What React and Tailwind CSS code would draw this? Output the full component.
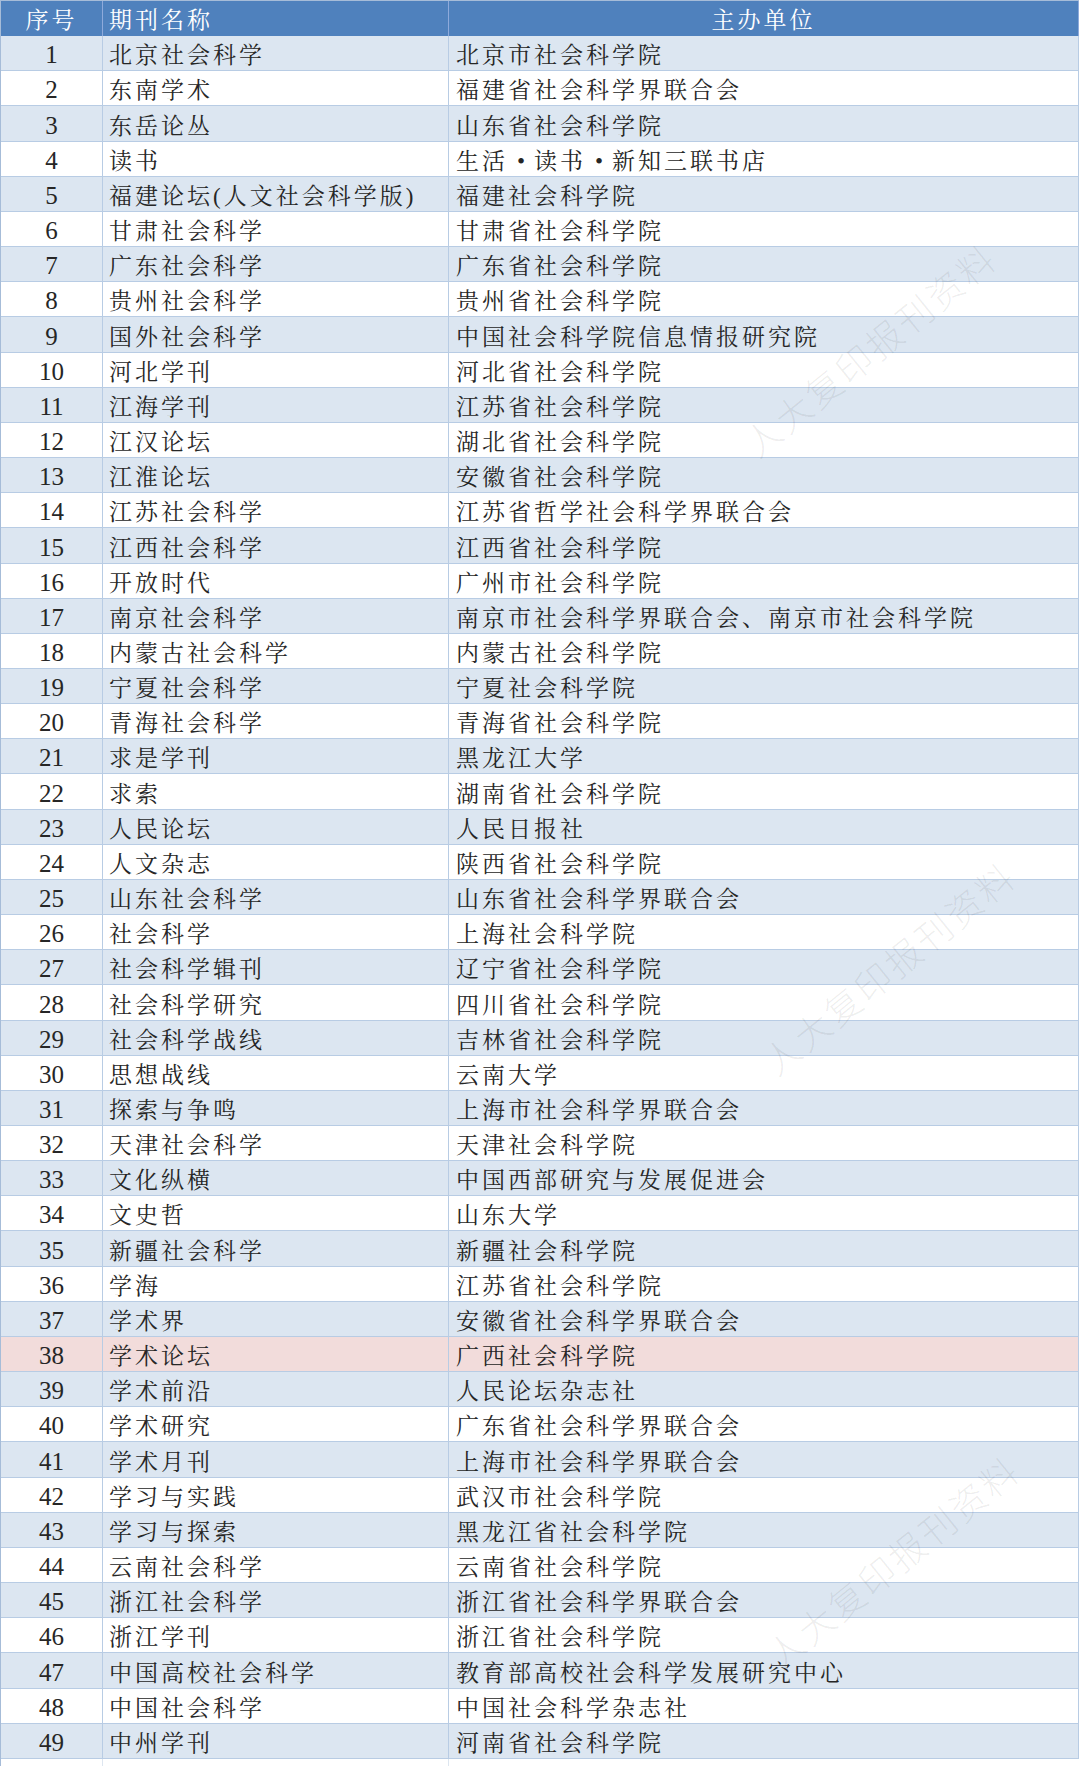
import React from 'react'

const rows = [
  ['北京社会科学', '北京市社会科学院'],
  ['东南学术', '福建省社会科学界联合会'],
  ['东岳论丛', '山东省社会科学院'],
  ['读书', 'DOTS'],
  ['福建论坛(人文社会科学版)', '福建社会科学院'],
  ['甘肃社会科学', '甘肃省社会科学院'],
  ['广东社会科学', '广东省社会科学院'],
  ['贵州社会科学', '贵州省社会科学院'],
  ['国外社会科学', '中国社会科学院信息情报研究院'],
  ['河北学刊', '河北省社会科学院'],
  ['江海学刊', '江苏省社会科学院'],
  ['江汉论坛', '湖北省社会科学院'],
  ['江淮论坛', '安徽省社会科学院'],
  ['江苏社会科学', '江苏省哲学社会科学界联合会'],
  ['江西社会科学', '江西省社会科学院'],
  ['开放时代', '广州市社会科学院'],
  ['南京社会科学', '南京市社会科学界联合会、南京市社会科学院'],
  ['内蒙古社会科学', '内蒙古社会科学院'],
  ['宁夏社会科学', '宁夏社会科学院'],
  ['青海社会科学', '青海省社会科学院'],
  ['求是学刊', '黑龙江大学'],
  ['求索', '湖南省社会科学院'],
  ['人民论坛', '人民日报社'],
  ['人文杂志', '陕西省社会科学院'],
  ['山东社会科学', '山东省社会科学界联合会'],
  ['社会科学', '上海社会科学院'],
  ['社会科学辑刊', '辽宁省社会科学院'],
  ['社会科学研究', '四川省社会科学院'],
  ['社会科学战线', '吉林省社会科学院'],
  ['思想战线', '云南大学'],
  ['探索与争鸣', '上海市社会科学界联合会'],
  ['天津社会科学', '天津社会科学院'],
  ['文化纵横', '中国西部研究与发展促进会'],
  ['文史哲', '山东大学'],
  ['新疆社会科学', '新疆社会科学院'],
  ['学海', '江苏省社会科学院'],
  ['学术界', '安徽省社会科学界联合会'],
  ['学术论坛', '广西社会科学院'],
  ['学术前沿', '人民论坛杂志社'],
  ['学术研究', '广东省社会科学界联合会'],
  ['学术月刊', '上海市社会科学界联合会'],
  ['学习与实践', '武汉市社会科学院'],
  ['学习与探索', '黑龙江省社会科学院'],
  ['云南社会科学', '云南省社会科学院'],
  ['浙江社会科学', '浙江省社会科学界联合会'],
  ['浙江学刊', '浙江省社会科学院'],
  ['中国高校社会科学', '教育部高校社会科学发展研究中心'],
  ['中国社会科学', '中国社会科学杂志社'],
  ['中州学刊', '河南省社会科学院'],
]

const font = { fontFamily: '"Liberation Serif", "Noto Serif CJK SC", "Noto Sans CJK SC", serif' }

// publisher of 读书, dots take a full character cell
function Dotted() {
  return (
    <span>
      生活<span className="inline-block w-[26px] text-center tracking-normal">•</span>读书<span className="inline-block w-[26px] text-center tracking-normal">•</span>新知三联书店
    </span>
  )
}

export default function App() {
  return (
    <div className="relative w-[1080px] h-[1766px] bg-white overflow-hidden text-[#262626]" style={font}>
      <div className="w-[1079px] border-t border-l border-[#a6bcd8]">
        {/* header */}
        <div className="grid grid-cols-[102px_346px_630px] h-[35.16px] bg-[#4f81bd] text-white text-[23px] tracking-[3px] leading-none">
          <div className="flex items-end justify-center pb-[4px] border-r border-[#8eaadb]">序号</div>
          <div className="flex items-end pl-[6px] pb-[4px] border-r border-[#8eaadb]">期刊名称</div>
          <div className="flex items-end justify-center pb-[4px] border-r border-[#8eaadb]">主办单位</div>
        </div>

        {rows.map((r, i) => {
          const n = i + 1
          const bg = n === 38 ? 'bg-[#f2dcdb]' : n % 2 === 1 ? 'bg-[#dce6f1]' : 'bg-white'
          return (
            <div
              key={n}
              className={`grid grid-cols-[102px_346px_630px] h-[35.16px] border-b border-[#b8cce4] text-[23px] leading-none ${bg}`}
            >
              <div className="flex items-end justify-center pb-[3px] text-[25px] border-r border-[#b8cce4]">{n}</div>
              <div className="flex items-end pl-[6px] pb-[3px] tracking-[3px] whitespace-nowrap border-r border-[#b8cce4]">{r[0]}</div>
              <div className="flex items-end pl-[7px] pb-[3px] tracking-[3px] whitespace-nowrap border-r border-[#b8cce4]">
                {r[1] === 'DOTS' ? <Dotted /> : r[1]}
              </div>
            </div>
          )
        })}

        <div className="grid grid-cols-[102px_346px_630px] h-[8px]">
          <div className="border-r border-[#dde6f0]"></div>
          <div className="border-r border-[#dde6f0]"></div>
          <div></div>
        </div>
      </div>

      {/* watermarks */}
      {[
        ['left-[869px] top-[349px]'],
        ['left-[888px] top-[967px]'],
        ['left-[892px] top-[1561px]'],
      ].map(([pos], k) => (
        <div
          key={k}
          className={`absolute ${pos} -translate-x-1/2 -translate-y-1/2 -rotate-[39deg] whitespace-nowrap text-[36px] tracking-[3px] text-black/[0.07] pointer-events-none`}
          style={{ fontFamily: '"Noto Sans CJK SC", sans-serif', fontWeight: 300 }}
        >
          人大复印报刊资料
        </div>
      ))}
    </div>
  )
}
